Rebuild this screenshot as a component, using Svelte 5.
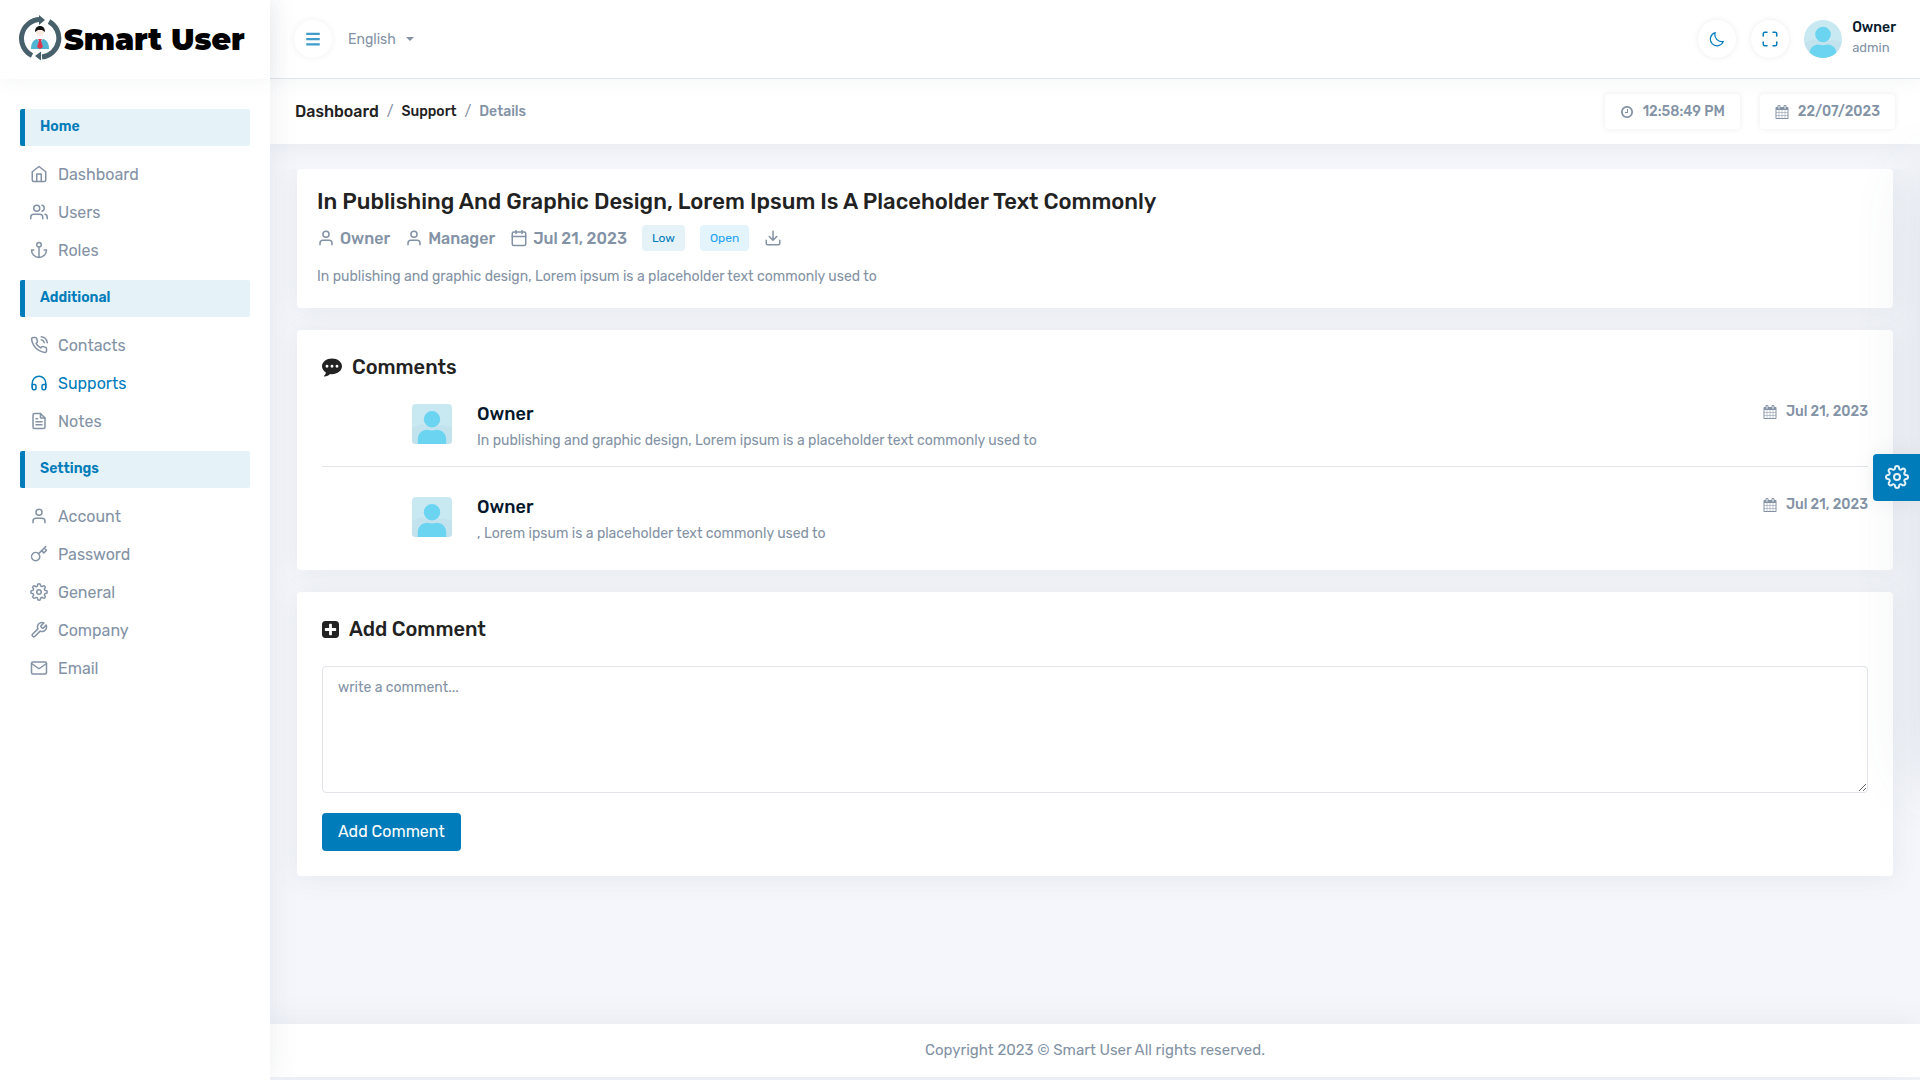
<script lang="ts">
  type Item = { label: string; icon: string; active?: boolean };

  const groups: { title: string; items: Item[] }[] = [
    {
      title: 'Home',
      items: [
        { label: 'Dashboard', icon: 'home' },
        { label: 'Users', icon: 'users' },
        { label: 'Roles', icon: 'anchor' },
      ],
    },
    {
      title: 'Additional',
      items: [
        { label: 'Contacts', icon: 'phone' },
        { label: 'Supports', icon: 'headphones', active: true },
        { label: 'Notes', icon: 'file' },
      ],
    },
    {
      title: 'Settings',
      items: [
        { label: 'Account', icon: 'user' },
        { label: 'Password', icon: 'key' },
        { label: 'General', icon: 'settings' },
        { label: 'Company', icon: 'tool' },
        { label: 'Email', icon: 'mail' },
      ],
    },
  ];

  const comments = [
    {
      name: 'Owner',
      date: 'Jul 21, 2023',
      text: 'In publishing and graphic design, Lorem ipsum is a placeholder text commonly used to',
    },
    { name: 'Owner', date: 'Jul 21, 2023', text: ', Lorem ipsum is a placeholder text commonly used to' },
  ];

  // outline icons, 24px grid
  const outline: Record<string, string> = {
    home: '<path d="M3 9l9-7 9 7v11a2 2 0 0 1-2 2H5a2 2 0 0 1-2-2z"/><path d="M9 22V12h6v10"/>',
    users: '<path d="M17 21v-2a4 4 0 0 0-4-4H5a4 4 0 0 0-4 4v2"/><circle cx="9" cy="7" r="4"/><path d="M23 21v-2a4 4 0 0 0-3-3.87M16 3.13a4 4 0 0 1 0 7.75"/>',
    anchor: '<circle cx="12" cy="5" r="3"/><path d="M12 22V8M5 12H2a10 10 0 0 0 20 0h-3"/>',
    phone: '<path d="M15.05 5A5 5 0 0 1 19 8.95M15.05 1A9 9 0 0 1 23 8.94m-1 7.98v3a2 2 0 0 1-2.18 2 19.79 19.79 0 0 1-8.63-3.07 19.5 19.5 0 0 1-6-6 19.79 19.79 0 0 1-3.07-8.67A2 2 0 0 1 4.11 2h3a2 2 0 0 1 2 1.72 12.84 12.84 0 0 0 .7 2.81 2 2 0 0 1-.45 2.11L8.09 9.91a16 16 0 0 0 6 6l1.27-1.27a2 2 0 0 1 2.11-.45 12.84 12.84 0 0 0 2.81.7A2 2 0 0 1 22 16.92z"/>',
    headphones: '<path d="M3 18v-6a9 9 0 0 1 18 0v6"/><path d="M21 19a2 2 0 0 1-2 2h-1a2 2 0 0 1-2-2v-3a2 2 0 0 1 2-2h3zM3 19a2 2 0 0 0 2 2h1a2 2 0 0 0 2-2v-3a2 2 0 0 0-2-2H3z"/>',
    file: '<path d="M14 2H6a2 2 0 0 0-2 2v16a2 2 0 0 0 2 2h12a2 2 0 0 0 2-2V8z"/><path d="M14 2v6h6M16 13H8M16 17H8M10 9H8"/>',
    user: '<path d="M20 21v-2a4 4 0 0 0-4-4H8a4 4 0 0 0-4 4v2"/><circle cx="12" cy="7" r="4"/>',
    key: '<path d="M21 2l-2 2m-7.61 7.61a5.5 5.5 0 1 1-7.778 7.778 5.5 5.5 0 0 1 7.777-7.777zm0 0L15.5 7.5m0 0l3 3L22 7l-3-3m-3.5 3.5L19 4"/>',
    settings: '<circle cx="12" cy="12" r="3"/><path d="M19.4 15a1.65 1.65 0 0 0 .33 1.82l.06.06a2 2 0 0 1 0 2.83 2 2 0 0 1-2.83 0l-.06-.06a1.65 1.65 0 0 0-1.82-.33 1.65 1.65 0 0 0-1 1.51V21a2 2 0 0 1-2 2 2 2 0 0 1-2-2v-.09A1.65 1.65 0 0 0 9 19.4a1.65 1.65 0 0 0-1.82.33l-.06.06a2 2 0 0 1-2.83 0 2 2 0 0 1 0-2.83l.06-.06a1.65 1.65 0 0 0 .33-1.82 1.65 1.65 0 0 0-1.51-1H3a2 2 0 0 1-2-2 2 2 0 0 1 2-2h.09A1.65 1.65 0 0 0 4.6 9a1.65 1.65 0 0 0-.33-1.82l-.06-.06a2 2 0 0 1 0-2.83 2 2 0 0 1 2.83 0l.06.06a1.65 1.65 0 0 0 1.82.33H9a1.65 1.65 0 0 0 1-1.51V3a2 2 0 0 1 2-2 2 2 0 0 1 2 2v.09a1.65 1.65 0 0 0 1 1.51 1.65 1.65 0 0 0 1.82-.33l.06-.06a2 2 0 0 1 2.83 0 2 2 0 0 1 0 2.83l-.06.06a1.65 1.65 0 0 0-.33 1.82V9a1.65 1.65 0 0 0 1.51 1H21a2 2 0 0 1 2 2 2 2 0 0 1-2 2h-.09a1.65 1.65 0 0 0-1.51 1z"/>',
    tool: '<path d="M14.7 6.3a1 1 0 0 0 0 1.4l1.6 1.6a1 1 0 0 0 1.4 0l3.77-3.77a6 6 0 0 1-7.94 7.94l-6.91 6.91a2.12 2.12 0 0 1-3-3l6.91-6.91a6 6 0 0 1 7.94-7.94l-3.76 3.76z"/>',
    mail: '<path d="M4 4h16a2 2 0 0 1 2 2v12a2 2 0 0 1-2 2H4a2 2 0 0 1-2-2V6a2 2 0 0 1 2-2z"/><path d="M22 6l-10 7L2 6"/>',
    calendar: '<rect x="3" y="4" width="18" height="18" rx="2"/><path d="M16 2v4M8 2v4M3 10h18"/>',
    download: '<path d="M21 15v4a2 2 0 0 1-2 2H5a2 2 0 0 1-2-2v-4M7 10l5 5 5-5M12 15V3"/>',
    menu: '<path d="M3 12h18M3 5h18M3 19h18"/>',
    moon: '<path d="M21.500 15.500A10 10 0 1 1 9.500 2.500a10 10 0 0 0 12 13z"/>',
    expand: '<path d="M8 3H5a2 2 0 0 0-2 2v3m18 0V5a2 2 0 0 0-2-2h-3m0 18h3a2 2 0 0 0 2-2v-3M3 16v3a2 2 0 0 0 2 2h3"/>',
  };

  // filled icons, 1792px grid
  const solid: Record<string, string> = {
    calendar: 'M192 1664h288v-288h-288v288zm352 0h320v-288h-320v288zm-352-352h288v-320h-288v320zm352 0h320v-320h-320v320zm-352-384h288v-288h-288v288zm736 736h320v-288h-320v288zm-384-736h320v-288h-320v288zm768 736h288v-288h-288v288zm-384-352h320v-320h-320v320zm-352-864v-288q0-13-9.5-22.5t-22.5-9.5h-64q-13 0-22.5 9.5t-9.5 22.5v288q0 13 9.5 22.5t22.5 9.5h64q13 0 22.5-9.5t9.5-22.5zm736 864h288v-320h-288v320zm-384-384h320v-288h-320v288zm384 0h288v-288h-288v288zm32-480v-288q0-13-9.5-22.5t-22.5-9.5h-64q-13 0-22.5 9.5t-9.5 22.5v288q0 13 9.5 22.5t22.5 9.5h64q13 0 22.5-9.5t9.5-22.5zm384-64v1280q0 52-38 90t-90 38h-1408q-52 0-90-38t-38-90v-1280q0-52 38-90t90-38h128v-96q0-66 47-113t113-47h64q66 0 113 47t47 113v96h384v-96q0-66 47-113t113-47h64q66 0 113 47t47 113v96h128q52 0 90 38t38 90z',
    clock: 'M1024 544v448q0 14-9 23t-23 9h-320q-14 0-23-9t-9-23v-64q0-14 9-23t23-9h224v-352q0-14 9-23t23-9h64q14 0 23 9t9 23zm416 352q0-148-73-273t-198-198-273-73-273 73-198 198-73 273 73 273 198 198 273 73 273-73 198-198 73-273zm224 0q0 209-103 385.5t-279.5 279.5-385.5 103-385.5-103-279.5-279.500-103-385.5 103-385.5 279.5-279.5 385.5-103 385.5 103 279.5 279.5 103 385.5z',
    plus: 'M1408 960v-128q0-26-19-45t-45-19h-320v-320q0-26-19-45t-45-19h-128q-26 0-45 19t-19 45v320h-320q-26 0-45 19t-19 45v128q0 26 19 45t45 19h320v320q0 26 19 45t45 19h128q26 0 45-19t19-45v-320h320q26 0 45-19t19-45zm256-544v960q0 119-84.5 203.5t-203.5 84.5h-960q-119 0-203.5-84.5t-84.5-203.5v-960q0-119 84.5-203.5t203.5-84.5h960q119 0 203.5 84.5t84.5 203.5z',
    comment: 'M896 128C401 128 0 443 0 832c0 226 137 428 348 556-20 130-80 220-170 300-20 20-8 60 30 56 220-24 400-110 520-226 54 10 110 18 168 18 495 0 896-315 896-704S1391 128 896 128zM448 704a128 128 0 1 1 0 256 128 128 0 0 1 0-256zm448 0a128 128 0 1 1 0 256 128 128 0 0 1 0-256zm448 0a128 128 0 1 1 0 256 128 128 0 0 1 0-256z',
  };

  let language = $state('English');
  let draft = $state('');
</script>

{#snippet icon(name: string, size = 18)}
  <svg class="outline" width={size} height={size} viewBox="0 0 24 24" aria-hidden="true">{@html outline[name]}</svg>
{/snippet}

{#snippet fa(name: string, size = 14, box = '0 0 1792 1792')}
  <svg class="solid" width={size} height={size} viewBox={box} aria-hidden="true"><path d={solid[name]} /></svg>
{/snippet}

{#snippet avatar()}
  <svg viewBox="0 0 38 38" preserveAspectRatio="none" aria-hidden="true">
    <rect width="38" height="38" fill="#c9e9f2" />
    <path d="M0 23l9-4 10 3 10-2 9 2v16H0z" fill="#c2e3ed" />
    <circle cx="19" cy="14.500" r="7.800" fill="#6bd4f1" />
    <path d="M5.500 38v-4c0-6 4-9.500 9-9.500q4.500 1.500 9 0c5 0 9 3.500 9 9.500v4z" fill="#6bd4f1" />
  </svg>
{/snippet}

<div class="layout">
  <aside class="sidebar">
    <a class="logo" href="#home">
      <svg width="44" height="46" viewBox="0 0 44 46" aria-hidden="true">
        <g fill="none" stroke="#47606b" stroke-width="5">
          <path d="M14 40.500A19 19 0 0 1 22 4.500" />
          <path d="M31 6.500a19 19 0 0 1-7 35.500" />
        </g>
        <path d="M21 0l6 5-6 5zM23 36.500v9l-6-4.500z" fill="#47606b" />
        <path d="M13 34c0-7 3-10 9-11 6 1 9 4 9 11z" fill="#50b4d2" />
        <path d="M18 23h8l-4 4z" fill="#fff" />
        <path d="M20 24h4l-1 2 2 6-3 2-3-2 2-6z" fill="#e0344d" />
        <circle cx="22" cy="17" r="4" fill="#fbe9e4" />
        <path d="M17 17c0-4 2-6 5-6s5 2 5 6l-3-2h-4z" fill="#111" />
      </svg>
      <span>Smart User</span>
    </a>
    <nav>
      {#each groups as group}
        <h6>{group.title}</h6>
        <ul>
          {#each group.items as item}
            <li>
              <a href="#{item.label.toLowerCase()}" class:active={item.active}>
                {@render icon(item.icon)}
                {item.label}
              </a>
            </li>
          {/each}
        </ul>
      {/each}
    </nav>
  </aside>

  <div class="page">
    <header class="topbar">
      <button class="round faded" aria-label="Toggle sidebar">{@render icon('menu')}</button>
      <div class="language">
        <select bind:value={language} aria-label="Language">
          <option>English</option>
        </select>
        <svg width="8" height="4" viewBox="0 0 8 4" aria-hidden="true"><path d="M0 0h8L4 4z" fill="currentColor" /></svg>
      </div>
      <div class="actions">
        <button class="round moon" aria-label="Dark mode">{@render icon('moon', 16)}</button>
        <button class="round" aria-label="Fullscreen">{@render icon('expand')}</button>
        <button class="profile">
          <span class="face">{@render avatar()}</span>
          <span class="who"><b>Owner</b><small>admin</small></span>
        </button>
      </div>
    </header>

    <div class="titlebar">
      <nav class="crumbs" aria-label="Breadcrumb">
        <a class="root" href="#dashboard">Dashboard</a>
        <i>/</i>
        <a href="#support">Support</a>
        <i>/</i>
        <span>Details</span>
      </nav>
      <div class="stamps">
        <div class="stamp">{@render fa('clock')} 12:58:49 PM</div>
        <div class="stamp">{@render fa('calendar')} 22/07/2023</div>
      </div>
    </div>

    <main>
      <section class="card ticket">
        <h4>In Publishing And Graphic Design, Lorem Ipsum Is A Placeholder Text Commonly</h4>
        <div class="meta">
          <span>{@render icon('user')} Owner</span>
          <span>{@render icon('user')} Manager</span>
          <span>{@render icon('calendar')} Jul 21, 2023</span>
          <em class="badge low">Low</em>
          <em class="badge open">Open</em>
          <a href="#download" aria-label="Download">{@render icon('download')}</a>
        </div>
        <p>In publishing and graphic design, Lorem ipsum is a placeholder text commonly used to</p>
      </section>

      <section class="card">
        <h5>{@render fa('comment', 20)} Comments</h5>
        {#each comments as comment}
          <article class="comment">
            <span class="thumb">{@render avatar()}</span>
            <div class="body">
              <h6>{comment.name}</h6>
              <p>{comment.text}</p>
            </div>
            <time>{@render fa('calendar')} {comment.date}</time>
          </article>
        {/each}
      </section>

      <section class="card">
        <h5>{@render fa('plus', 17, '128 128 1536 1536')} Add Comment</h5>
        <form onsubmit={(e) => e.preventDefault()}>
          <textarea bind:value={draft} placeholder="write a comment..." aria-label="Comment"></textarea>
          <button class="submit" type="submit">Add Comment</button>
        </form>
      </section>
    </main>

    <footer>Copyright 2023 © Smart User All rights reserved.</footer>
  </div>
</div>

<div class="customizer">
  <button aria-label="Customize">{@render icon('settings', 24)}</button>
</div>

<style>
  :global(body) { background: #edf1f5; }
  :global(body), button, select, textarea { font-family: Rubik, Roboto, 'Liberation Sans', sans-serif; }
  * { box-sizing: border-box; }
  h4, h5, h6, p, ul { margin: 0; padding: 0; font-weight: 500; }
  ul { font-weight: 400; }
  a { color: inherit; text-decoration: none; }
  button { border: 0; padding: 0; background: none; cursor: pointer; }
  svg { display: block; flex-shrink: 0; }
  .outline { fill: none; stroke: currentColor; stroke-width: 2; stroke-linecap: round; stroke-linejoin: round; }
  .solid { fill: currentColor; }

  .layout { display: grid; grid-template-columns: 270px minmax(0, 1fr); min-height: 100vh; font-size: 14px; color: #8392a5; }

  .sidebar { position: relative; z-index: 3; background: #fff; box-shadow: 0 0 28px rgba(89, 98, 116, 0.11); }
  .logo { display: flex; align-items: center; gap: 2px; height: 79px; padding: 0 18px 4px; box-shadow: 0 0 20px rgba(89, 102, 122, 0.08); color: #000; font: 900 30px Montserrat, Inter, sans-serif; white-space: nowrap; }
  .logo span { padding-top: 4px; }
  .sidebar nav { padding: 30px 20px; }
  .sidebar h6 { height: 37px; padding: 0 15px; border-left: 5px solid #007cba; border-radius: 2px; background: #e5f2f8; color: #007cba; font-size: 14px; line-height: 36px; font-weight: 600; }
  .sidebar ul { list-style: none; padding: 9px 0 11px; }
  .sidebar li a { display: flex; align-items: center; gap: 10px; height: 38px; padding-left: 10px; font-size: 16px; }
  .sidebar li a.active { color: #007cba; }

  .page { display: flex; flex-direction: column; min-width: 0; background: #f4f6fb; }
  .topbar { position: relative; z-index: 2; display: flex; align-items: center; height: 79px; padding: 0 24px; background: #fff; border-bottom: 1px solid #e0e5ea; box-shadow: 0 0 20px rgba(89, 102, 122, 0.08); }
  .round { display: grid; place-items: center; width: 38px; height: 38px; border-radius: 50%; color: #007cba; box-shadow: 0 0 6px rgba(0, 0, 0, 0.08); }
  .faded { opacity: 0.75; }
  .faded .outline { stroke-width: 3; stroke-linecap: butt; }
  .round.moon .outline { stroke-width: 1.8; }
  .language { display: flex; align-items: center; gap: 10px; margin-left: 16px; }
  .language select { appearance: none; border: 0; padding: 0; background: none; color: inherit; font-size: 14px; }
  .actions { display: flex; align-items: center; gap: 15px; margin-left: auto; }
  .profile { display: flex; align-items: center; gap: 10px; color: inherit; text-align: left; }
  .face { width: 38px; height: 38px; border-radius: 50%; overflow: hidden; }
  .face svg, .thumb svg { width: 100%; height: 100%; }
  .who { display: grid; gap: 2px; padding-bottom: 2px; }
  .who b { color: #04172b; font-size: 14px; line-height: 18px; font-weight: 500; }
  .who small { font-size: 13px; line-height: 18px; }

  .titlebar { position: relative; z-index: 1; display: flex; align-items: center; justify-content: space-between; height: 65px; padding: 0 25px; background: #fff; box-shadow: 0 0 24px rgba(89, 98, 116, 0.1); }
  .crumbs { display: flex; align-items: center; gap: 8px; color: #222; font-weight: 500; }
  .crumbs .root { font-size: 16px; }
  .crumbs i { font-style: normal; font-weight: 400; color: #8392a5; }
  .crumbs span { color: #8392a5; }
  .stamps { display: flex; gap: 20px; }
  .stamp { display: flex; align-items: center; gap: 9px; height: 35px; padding: 0 15px; border-radius: 4px; background: #fff; box-shadow: 0 0 6px rgba(0, 0, 0, 0.08); font-weight: 500; }

  main { flex: 1; display: flex; flex-direction: column; gap: 22px; margin-top: 25px; padding: 0 27px 40px; overflow: hidden; }
  .card { padding: 25px; border-radius: 4px; background: #fff; box-shadow: 0 2px 28px rgba(89, 98, 116, 0.09); }
  .card h5 { display: flex; align-items: center; gap: 10px; color: #222; font-size: 20px; line-height: 24px; }
  .card p { font-weight: 400; line-height: 20px; }
  .ticket { padding: 20px 20px 21px; }
  .ticket h4 { color: #222; font-size: 22px; line-height: 26px; }
  .meta { display: flex; align-items: center; gap: 15px; margin: 10px 0 16px; font-size: 16px; font-weight: 500; }
  .meta span { display: flex; align-items: center; gap: 5px; }
  .badge { padding: 5px 10px; border-radius: 4px; font-size: 12px; line-height: 16px; font-style: normal; font-weight: 400; }
  .low { background: #e5f2f8; color: #007cba; }
  .open { background: #e3f4fd; color: #1da1f2; }

  .comment { display: flex; align-items: flex-start; padding: 25px 0 15px 90px; }
  .comment + .comment { padding: 30px 0 1px 90px; border-top: 1px solid #e1e4e8; }
  .thumb { width: 40px; height: 40px; margin-right: 25px; border-radius: 4px; overflow: hidden; }
  .body { flex: 1; }
  .body h6 { margin-bottom: 7px; color: #04172b; font-size: 18px; line-height: 20px; }
  .comment time { display: flex; align-items: center; gap: 9px; font-size: 14px; line-height: 15px; font-weight: 500; }

  form { display: flex; flex-direction: column; align-items: flex-start; gap: 20px; margin-top: 25px; }
  textarea { display: block; width: 100%; height: 127px; padding: 11px 15px; border: 1px solid #e1e4e8; border-radius: 4px; background: #fff; color: #222; font-size: 14px; line-height: 20px; }
  textarea::placeholder { color: #8392a5; }
  .submit { height: 38px; padding: 0 16px 1px; border-radius: 4px; background: #007cba; color: #fff; font-size: 16px; }

  footer { position: relative; z-index: 1; height: 53px; margin-bottom: 3px; background: #fff; box-shadow: 0 0 30px rgba(89, 98, 116, 0.1); font-size: 15px; line-height: 52px; text-align: center; }

  /* drawer parked just past the right edge, only its tab shows */
  .customizer { position: fixed; z-index: 4; left: 100%; top: 16vh; width: 300px; height: 56vh; box-shadow: 0 0 60px rgba(89, 98, 116, 0.16); }
  .customizer button { position: absolute; right: 100%; top: 281px; display: grid; place-items: center; width: 47px; height: 47px; border-radius: 4px 0 0 4px; background: #007cba; color: #e6f2f8; box-shadow: 0 0 20px rgba(89, 102, 122, 0.1); }
</style>
